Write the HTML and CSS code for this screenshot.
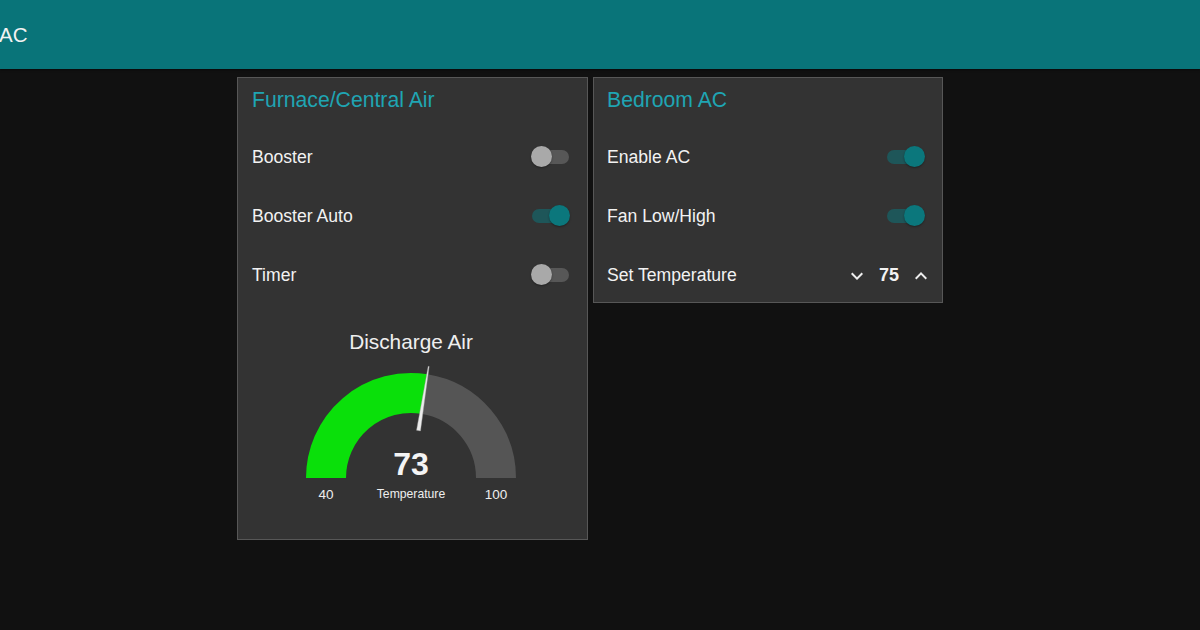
FILE: index.html
```html
<!DOCTYPE html>
<html>
<head>
<meta charset="utf-8">
<link rel="stylesheet" href="styles.css">
</head>
<body>
<header class="toolbar"><span class="toolbar-title">AC</span></header>
<main class="groups">
  <section class="card card-furnace">
    <h2 class="card-title">Furnace/Central Air</h2>
    <div class="rows">
      <div class="row"><span class="label">Booster</span><span class="switch"><span class="track"></span><span class="thumb"></span></span></div>
      <div class="row"><span class="label">Booster Auto</span><span class="switch on"><span class="track"></span><span class="thumb"></span></span></div>
      <div class="row"><span class="label">Timer</span><span class="switch"><span class="track"></span><span class="thumb"></span></span></div>
    </div>
    <div class="gauge">
      <div class="gauge-title">Discharge Air</div>
      <svg class="gauge-svg" width="240" height="160" viewBox="0 0 240 160">
        <path d="M35 124 A85 85 0 0 1 133.30 40.05" fill="none" stroke="#0ae00a" stroke-width="40"/>
        <path d="M133.30 40.05 A85 85 0 0 1 205 124" fill="none" stroke="#555555" stroke-width="40"/>
        <polygon points="129.49,76.90 125.53,76.28 137.19,12.31 138.17,12.47" fill="#ececec" stroke="#9a9a9a" stroke-width="0.4"/>
        <text class="g-value" x="120" y="121" text-anchor="middle">73</text>
        <text class="g-min" x="35" y="145" text-anchor="middle">40</text>
        <text class="g-unit" x="120" y="144" text-anchor="middle">Temperature</text>
        <text class="g-max" x="205" y="145" text-anchor="middle">100</text>
      </svg>
    </div>
  </section>
  <section class="card card-bedroom">
    <h2 class="card-title">Bedroom AC</h2>
    <div class="rows">
      <div class="row"><span class="label">Enable AC</span><span class="switch on"><span class="track"></span><span class="thumb"></span></span></div>
      <div class="row"><span class="label">Fan Low/High</span><span class="switch on"><span class="track"></span><span class="thumb"></span></span></div>
      <div class="row"><span class="label">Set Temperature</span>
        <span class="numeric">
          <svg class="chev" width="24" height="24" viewBox="0 0 24 24"><path d="M7.41 8.59L12 13.17l4.59-4.58L18 10l-6 6-6-6 1.41-1.41z" fill="#eeeeee"/></svg>
          <span class="num">75</span>
          <svg class="chev" width="24" height="24" viewBox="0 0 24 24"><path d="M7.41 15.41L12 10.83l4.59 4.58L18 14l-6-6-6 6z" fill="#eeeeee"/></svg>
        </span>
      </div>
    </div>
  </section>
</main>
</body>
</html>
```
FILE: styles.css
```css
html, body {
  margin: 0;
  padding: 0;
}
body {
  background: #111111;
  font-family: "Liberation Sans", Arial, sans-serif;
  color: #eeeeee;
  width: 1200px;
  height: 630px;
  overflow: hidden;
}
.toolbar {
  height: 69px;
  background: #097479;
  display: flex;
  align-items: center;
  box-shadow: 0 1px 2px rgba(0,0,0,0.5);
}
.toolbar-title {
  font-size: 20.5px;
  color: #f2f2f2;
  padding-top: 1px;
  margin-left: -1px;
}
.groups {
  display: flex;
  align-items: flex-start;
  gap: 5px;
  padding: 8px 0 0 237px;
}
.card {
  background: #333333;
  border: 1px solid #575757;
  box-sizing: border-box;
  padding: 0 17px 0 14px;
}
.card-furnace {
  width: 351px;
  padding-bottom: 25px;
}
.card-bedroom {
  width: 350px;
  padding-left: 13px;
  padding-bottom: 3px;
}
.card-title {
  margin: 0;
  padding-top: 10px;
  line-height: 24px;
  font-size: 21.2px;
  font-weight: normal;
  color: #1fa5b3;
  margin-bottom: 21px;
}
.rows {
  display: flex;
  flex-direction: column;
  gap: 11px;
}
.row {
  height: 48px;
  display: flex;
  align-items: center;
  justify-content: space-between;
}
.label {
  font-size: 17.6px;
  color: #f2f2f2;
  padding-top: 1px;
}
.switch {
  position: relative;
  width: 39px;
  height: 22px;
  flex: none;
}
.switch .track {
  position: absolute;
  left: 1px;
  right: 1px;
  top: 4px;
  height: 14px;
  border-radius: 7px;
  background: #575757;
}
.switch .thumb {
  position: absolute;
  left: 0;
  top: 0;
  width: 21px;
  height: 21px;
  border-radius: 50%;
  background: #a9a9a9;
  box-shadow: 0 1px 2px rgba(0,0,0,0.35);
}
.switch.on .track {
  background: #1e5659;
}
.switch.on .thumb {
  left: 18px;
  background: #0b777c;
}
.numeric {
  display: flex;
  align-items: center;
  gap: 9.5px;
  margin-right: -7.5px;
  padding-top: 1px;
}
.chev {
  display: block;
}
.num {
  font-size: 18px;
  font-weight: bold;
  color: #f2f2f2;
}
.gauge {
  margin-top: 31px;
  display: flex;
  flex-direction: column;
  align-items: center;
}
.gauge-title {
  font-size: 20.8px;
  line-height: 24px;
  color: #efefef;
}
.gauge-svg {
  display: block;
}
.g-value {
  font-family: "Liberation Sans", Arial, sans-serif;
  font-size: 32px;
  font-weight: bold;
  fill: #f4f4f4;
}
.g-min, .g-max {
  font-family: "Liberation Sans", Arial, sans-serif;
  font-size: 13.5px;
  fill: #eeeeee;
}
.g-unit {
  font-family: "Liberation Sans", Arial, sans-serif;
  font-size: 12.2px;
  fill: #eeeeee;
}
```
